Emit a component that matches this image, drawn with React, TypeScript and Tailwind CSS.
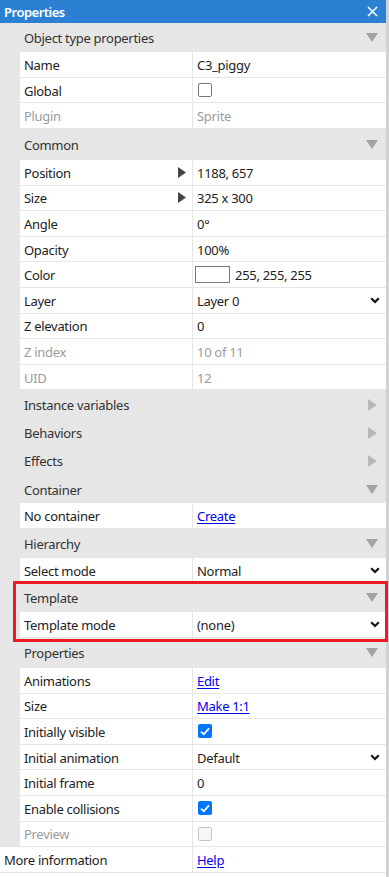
import type { ReactNode } from "react";

function DownTri() {
  return (
    <svg width="12" height="9" viewBox="0 0 12 9" className="mt-[-2px] shrink-0">
      <path d="M0 0h12L6 9z" fill="#a3a3a3" />
    </svg>
  );
}

function RightTri() {
  return (
    <svg width="9" height="12" viewBox="0 0 9 12" className="mr-[1px] mt-[-2px] shrink-0">
      <path d="M0 0l9 6-9 6z" fill="#b8b8b8" />
    </svg>
  );
}

function Chevron() {
  return (
    <svg width="10" height="7" viewBox="0 0 10 7" className="mt-[-2px] shrink-0">
      <path d="M1.2 1.2 5 5l3.8-3.8" fill="none" stroke="#111" strokeWidth="2.2" />
    </svg>
  );
}

function Checkbox({ checked, disabled }: { checked?: boolean; disabled?: boolean }) {
  if (checked) {
    return (
      <span className="mt-[-2px] flex size-[14px] items-center justify-center rounded-[2px] bg-[#0075ff]">
        <svg width="10" height="9" viewBox="0 0 10 9">
          <path d="M1 4.6 3.8 7.3 9 1.4" fill="none" stroke="#fff" strokeWidth="1.8" />
        </svg>
      </span>
    );
  }
  return (
    <span
      className={
        disabled
          ? "mt-[-2px] block size-[14px] rounded-[2px] border border-[#c6c6c6] bg-[#f6f6f6]"
          : "mt-[-2px] block size-[14px] rounded-[2px] border border-[#767676] bg-white"
      }
    />
  );
}

function Header({ title, open = true, h = "h-[30px]" }: { title: string; open?: boolean; h?: string }) {
  return (
    <div className={`flex ${h} items-center justify-between pl-[24px] pr-[8px] pt-[2px] text-[#333]`}>
      <span>{title}</span>
      {open ? <DownTri /> : <RightTri />}
    </div>
  );
}

function Row({
  label,
  children,
  disabled,
  arrow,
  full,
}: {
  label: string;
  children?: ReactNode;
  disabled?: boolean;
  arrow?: boolean;
  full?: boolean;
}) {
  return (
    <div
      className={`${full ? "" : "ml-[20px]"} grid h-[25.6px] border-b border-[#e6e6e6] bg-white ${
        full ? "grid-cols-[193px_1fr]" : "grid-cols-[173px_1fr]"
      }`}
    >
      <div
        className={`flex items-center justify-between border-r border-[#e6e6e6] pl-[4px] pr-[6px] pt-[2px] ${
          disabled ? "text-[#9b9b9b]" : "text-[#222]"
        }`}
      >
        <span>{label}</span>
        {arrow ? (
          <svg width="8" height="11" viewBox="0 0 8 11" className="mt-[-2px]">
            <path d="M0 0l8 5.5L0 11z" fill="#444" />
          </svg>
        ) : null}
      </div>
      <div
        className={`flex items-center justify-between pl-[4px] pr-[6px] pt-[2px] ${
          disabled ? "text-[#9b9b9b]" : "text-[#222]"
        }`}
      >
        {children}
      </div>
    </div>
  );
}

function Select({ value }: { value: string }) {
  return (
    <>
      <span>{value}</span>
      <Chevron />
    </>
  );
}

function Link({ children }: { children: ReactNode }) {
  return <span className="text-[#0000ee] underline underline-offset-2">{children}</span>;
}

export default function App() {
  return (
    <div
      className="flex min-h-screen bg-white text-[13px] leading-none tracking-[-0.3px]"
      style={{ fontFamily: '"Segoe UI", "Noto Sans", sans-serif' }}
    >
      <div className="w-[386px]">
        <div className="flex h-[23.3px] items-center justify-between bg-[#2b80d3] pl-[4px] pr-[8px] pt-[2px] text-white">
          <span className="font-semibold tracking-[-0.5px]">Properties</span>
          <svg width="11" height="11" viewBox="0 0 11 11" className="mt-[-2px]">
            <path d="M1 1l9 9M10 1l-9 9" stroke="#fff" strokeWidth="1.6" />
          </svg>
        </div>

        <div className="bg-[#e6e6e6]">
          <Header title="Object type properties" h="h-[29px]" />
          <Row label="Name">
            <span>C3_piggy</span>
          </Row>
          <Row label="Global">
            <span className="pl-[1px]">
              <Checkbox />
            </span>
          </Row>
          <Row label="Plugin" disabled>
            <span>Sprite</span>
          </Row>

          <Header title="Common" h="h-[31px]" />
          <Row label="Position" arrow>
            <span>1188, 657</span>
          </Row>
          <Row label="Size" arrow>
            <span>325 x 300</span>
          </Row>
          <Row label="Angle">
            <span>0°</span>
          </Row>
          <Row label="Opacity">
            <span>100%</span>
          </Row>
          <Row label="Color">
            <span className="flex items-center gap-[5px]">
              <span className="ml-[-2px] mt-[-2px] block h-[17px] w-[35px] border border-[#7a7a7a] bg-white" />
              <span>255, 255, 255</span>
            </span>
          </Row>
          <Row label="Layer">
            <Select value="Layer 0" />
          </Row>
          <Row label="Z elevation">
            <span>0</span>
          </Row>
          <Row label="Z index" disabled>
            <span>10 of 11</span>
          </Row>
          <Row label="UID" disabled>
            <span>12</span>
          </Row>

          <Header title="Instance variables" open={false} h="h-[28.2px]" />
          <Header title="Behaviors" open={false} h="h-[28.2px]" />
          <Header title="Effects" open={false} h="h-[28.2px]" />
          <Header title="Container" h="h-[28.2px]" />
          <Row label="No container">
            <Link>Create</Link>
          </Row>

          <Header title="Hierarchy" h="h-[29px]" />
          <Row label="Select mode">
            <Select value="Normal" />
          </Row>

          <div className="relative">
            <Header title="Template" h="h-[29px]" />
            <Row label="Template mode">
              <Select value="(none)" />
            </Row>
            <div className="pointer-events-none absolute bottom-[-4.5px] left-[13px] right-[-2px] top-[-2.5px] border-[3px] border-[#ec1c24]" />
          </div>

          <Header title="Properties" h="h-[30px]" />
          <Row label="Animations">
            <Link>Edit</Link>
          </Row>
          <Row label="Size">
            <Link>Make 1:1</Link>
          </Row>
          <Row label="Initially visible">
            <span className="pl-[1px]">
              <Checkbox checked />
            </span>
          </Row>
          <Row label="Initial animation">
            <Select value="Default" />
          </Row>
          <Row label="Initial frame">
            <span>0</span>
          </Row>
          <Row label="Enable collisions">
            <span className="pl-[1px]">
              <Checkbox checked />
            </span>
          </Row>
          <Row label="Preview" disabled>
            <span className="pl-[1px]">
              <Checkbox disabled />
            </span>
          </Row>
        </div>
        <Row label="More information" full>
          <Link>Help</Link>
        </Row>
      </div>
      <div className="w-[3px] bg-[#d2d2d2]" />
    </div>
  );
}
